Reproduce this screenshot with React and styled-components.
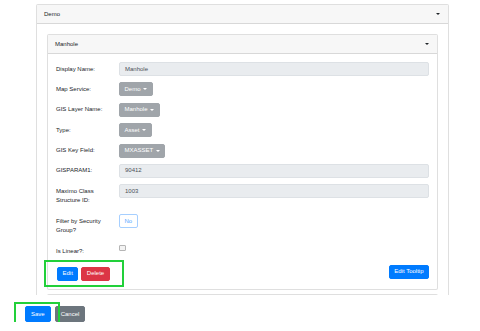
import React from "react";
import styled, { createGlobalStyle } from "styled-components";

const GlobalStyle = createGlobalStyle`
  * { box-sizing: border-box; }
  html, body { margin: 0; padding: 0; background: #fff; }
  body {
    font-family: "Liberation Sans", Arial, sans-serif;
    font-size: 6px;
    line-height: 9px;
    color: #212529;
  }
`;

const Viewport = styled.div`
  height: 295px;
  overflow: hidden;
  padding: 4px 31px 0 36px;
`;

const Card = styled.div`
  border: 1px solid rgba(0, 0, 0, 0.125);
  border-radius: 2px;
  background: #fff;
  margin-top: ${(p) => p.gap || 0}px;
`;

const CardHeader = styled.div`
  height: 19px;
  display: flex;
  align-items: center;
  justify-content: space-between;
  padding: 0 8px 0 7px;
  background: #f7f7f7;
  border-bottom: 1px solid rgba(0, 0, 0, 0.125);
`;

const Caret = styled.span`
  width: 0;
  height: 0;
  border-top: 2.5px solid ${(p) => p.color || "#212529"};
  border-left: 2px solid transparent;
  border-right: 2px solid transparent;
  margin-left: ${(p) => p.offset || 0}px;
`;

const OuterBody = styled.div`
  padding: 10px 10px;
`;

const InnerBody = styled.div`
  padding: 8px 8px 8px;
`;

const Row = styled.div`
  display: grid;
  grid-template-columns: 63px 1fr;
  align-items: start;
  margin-bottom: 6.4px;
`;

const Label = styled.div`
  padding: 2.5px 8px ${(p) => (p.wrap ? 3 : 2.5)}px 0;
`;

const Input = styled.div`
  flex: 1;
  height: 14px;
  display: flex;
  align-items: center;
  padding: 0 5px;
  background: #e9ecef;
  border: 1px solid #dde1e5;
  border-radius: 2px;
  color: #495057;
`;

const Control = styled.div`
  display: flex;
  align-items: flex-start;
`;

const Button = styled.button`
  font: inherit;
  height: ${(p) => (p.tall ? 16 : 14)}px;
  padding: 0 ${(p) => (p.tall ? 5 : 4.5)}px;
  display: inline-flex;
  align-items: center;
  border-radius: 2px;
  border: 1px solid ${(p) => p.bg};
  background: ${(p) => p.bg};
  color: #fff;
  cursor: pointer;
`;

const OutlineButton = styled.button`
  font: inherit;
  height: 14px;
  padding: 0 4.5px;
  border-radius: 2px;
  border: 1px solid #a6cfff;
  background: #fff;
  color: #5aa6ff;
`;

const Checkbox = styled.span`
  display: block;
  width: 6.5px;
  height: 6.5px;
  border: 1px solid #b5b5b5;
  border-radius: 1px;
  background: #f3f3f3;
  margin-top: 0.5px;
`;

const ActionRow = styled.div`
  display: flex;
  justify-content: space-between;
  align-items: flex-start;
`;

const Group = styled.div`
  position: relative;
  display: flex;
  gap: 3px;
  margin-top: ${(p) => p.top || 0}px;
  margin-left: ${(p) => p.left || 0}px;

  &::after {
    content: "";
    position: absolute;
    top: ${(p) => p.box[0]}px;
    right: ${(p) => p.box[1]}px;
    bottom: ${(p) => p.box[2]}px;
    left: ${(p) => p.box[3]}px;
    border: 2.5px solid #22d03a;
    pointer-events: none;
  }
`;

const Footer = styled.div`
  display: flex;
  gap: 4px;
  padding: 11px 0 0 25px;
`;

const fields = [
  { label: "Display Name:", input: "Manhole" },
  { label: "Map Service:", select: "Demo" },
  { label: "GIS Layer Name:", select: "Manhole" },
  { label: "Type:", select: "Asset" },
  { label: "GIS Key Field:", select: "MXASSET" },
  { label: "GISPARAM1:", input: "90412" },
  { label: "Maximo Class Structure ID:", input: "1003", wrap: true },
  { label: "Filter by Security Group?", toggle: "No", wrap: true },
  { label: "Is Linear?:", check: true },
];

const Field = ({ f }) => (
  <Row>
    <Label wrap={f.wrap}>{f.label}</Label>
    <Control>
      {f.input && <Input>{f.input}</Input>}
      {f.select && (
        <Button bg="#a0a5aa">
          {f.select}
          <Caret color="#fff" offset={2.5} />
        </Button>
      )}
      {f.toggle && <OutlineButton>{f.toggle}</OutlineButton>}
      {f.check && <Checkbox />}
    </Control>
  </Row>
);

const App = () => {
  return (
    <>
      <GlobalStyle />
      <Viewport>
        <Card>
          <CardHeader>
            <span>Demo</span>
            <Caret />
          </CardHeader>
          <OuterBody>
            <Card>
              <CardHeader>
                <span>Manhole</span>
                <Caret />
              </CardHeader>
              <InnerBody>
                {fields.map((f) => (
                  <Field key={f.label} f={f} />
                ))}
                <ActionRow>
                  <Group top={2} left={1} box={[-7, -14, -6, -13]}>
                    <Button bg="#007bff">Edit</Button>
                    <Button bg="#dc3545">Delete</Button>
                  </Group>
                  <Button bg="#007bff">Edit Tooltip</Button>
                </ActionRow>
              </InnerBody>
            </Card>
            <Card gap={4}>
              <CardHeader>
                <span>&nbsp;</span>
              </CardHeader>
            </Card>
          </OuterBody>
        </Card>
      </Viewport>
      <Footer>
        <Group box={[-4, -9, -5, -11]}>
          <Button tall bg="#007bff">Save</Button>
        </Group>
        <Button tall bg="#6c757d">Cancel</Button>
      </Footer>
    </>
  );
};

export default App;
